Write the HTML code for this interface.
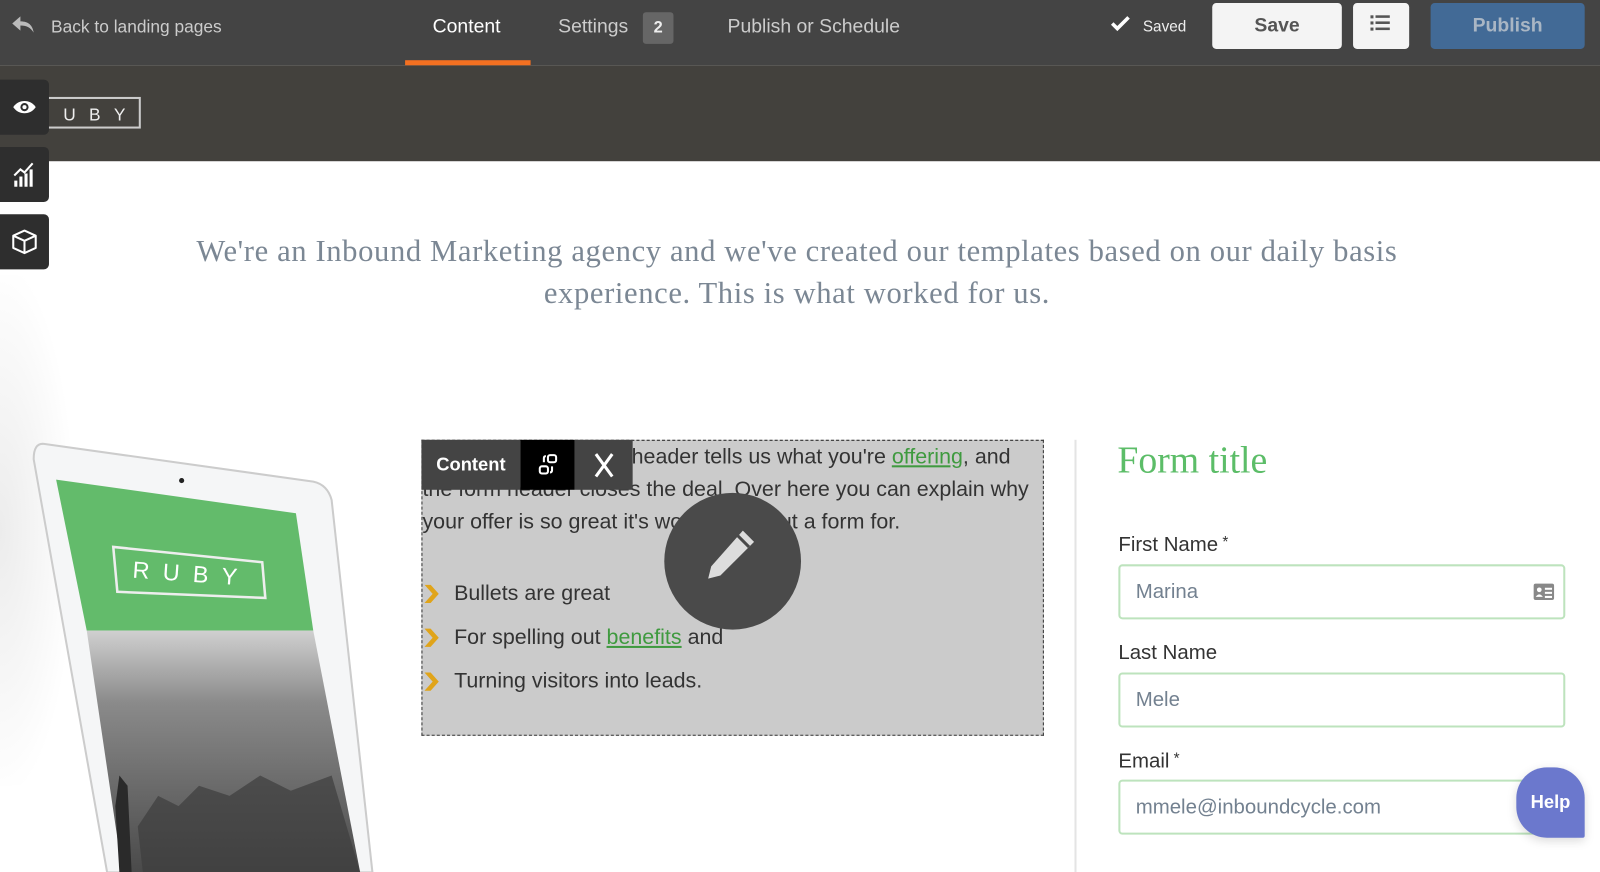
<!DOCTYPE html>
<html><head><meta charset="utf-8"><style>
*{box-sizing:border-box;margin:0;padding:0}
body{width:1600px;height:855px;overflow:hidden;background:#fff;font-family:"Liberation Sans",sans-serif;position:relative}
#w{position:absolute;left:0;top:0;width:1568px;height:838px;transform:scale(1.0204);transform-origin:0 0}
.abs{position:absolute}
.top{left:0;top:0;width:1600px;height:64px;background:#444}
.band{left:0;top:64px;width:1600px;height:94px;background:#43413d}
.nav{color:#ddd;font-size:19px;top:16px}
.side{left:0;width:48px;height:54px;background:#2e2e2e;border-radius:0 5px 5px 0;display:flex;align-items:center;justify-content:center}
.intro{left:160px;width:1242px;top:226px;text-align:center;font-family:"Liberation Serif",serif;font-size:30px;letter-spacing:0.6px;line-height:41px;color:#7b8794;white-space:nowrap}
.cbox{left:413px;top:431px;width:610px;height:290px;background:#cbcbcb;border:1.5px dashed #333;font-family:"Liberation Sans Narrow","Liberation Sans",sans-serif;font-size:21px;color:#333}
.cbox p{position:absolute;left:0;line-height:32px}
.cbox a{color:#3f9a3f;text-decoration:underline}
.lbl{left:1096px;font-size:20px;color:#333}
.inp{left:1096px;width:438px;height:54px;border:2px solid #bde3bd;border-radius:4px;font-size:20px;color:#738190;padding:14px 0 0 15px;background:#fff}
</style></head><body><div id="w">
<div class="abs top"></div>
<div class="abs band"></div>
<svg class="abs" style="left:10px;top:14px" width="26" height="22" viewBox="0 0 26 22"><path d="M10 2 L2 9 L10 16 V11 C16 11 20 13 23 18 C22 11 18 7 10 7 Z" fill="#bbb"/></svg>
<div class="abs nav" style="left:50px;font-size:17px;top:17px;color:#ccc">Back to landing pages</div>
<div class="abs nav" style="left:424px;color:#fff">Content</div>
<div class="abs" style="left:397px;top:59px;width:123px;height:5px;background:#f37021"></div>
<div class="abs nav" style="left:547px;color:#ccc">Settings</div>
<div class="abs" style="left:630px;top:12px;width:30px;height:31px;background:#666;border-radius:3px;color:#eee;font-weight:bold;font-size:16px;text-align:center;line-height:31px">2</div>
<div class="abs nav" style="left:713px;color:#ccc">Publish or Schedule</div>
<svg class="abs" style="left:1088px;top:15px" width="20" height="16" viewBox="0 0 20 16"><path d="M2 8 L7 13 L18 2" stroke="#fff" stroke-width="3.5" fill="none"/></svg>
<div class="abs" style="left:1120px;top:18px;color:#eee;font-size:15px">Saved</div>
<div class="abs" style="left:1188px;top:3px;width:127px;height:45px;background:#f4f4f4;border-radius:4px;color:#555;font-weight:bold;font-size:19px;text-align:center;line-height:45px">Save</div>
<div class="abs" style="left:1326px;top:3px;width:55px;height:45px;background:#f4f4f4;border-radius:4px"></div>
<svg class="abs" style="left:1343px;top:14px" width="20" height="18" viewBox="0 0 20 18"><g fill="#555"><rect x="0" y="1" width="3" height="3"/><rect x="0" y="7" width="3" height="3"/><rect x="0" y="13" width="3" height="3"/><rect x="5" y="1" width="14" height="2.5"/><rect x="5" y="7" width="14" height="2.5"/><rect x="5" y="13" width="14" height="2.5"/></g></svg>
<div class="abs" style="left:1402px;top:3px;width:151px;height:45px;background:#426a96;border-radius:4px;color:#a9b6c4;font-weight:bold;font-size:19px;text-align:center;line-height:45px">Publish</div>

<div class="abs" style="left:30px;top:95px;width:108px;height:31px;border:2px solid #ccc;color:#eee;font-size:17px;letter-spacing:13px;padding:6px 0 0 30px">UBY</div>
<div class="abs side" style="top:78px"><svg width="24" height="16" viewBox="0 0 24 16"><path d="M1 8 C6 0 18 0 23 8 C18 16 6 16 1 8Z" fill="#fff"/><circle cx="12" cy="8" r="4" fill="#2e2e2e"/><circle cx="12" cy="8" r="2" fill="#fff"/></svg></div>
<div class="abs side" style="top:144px"><svg width="24" height="26" viewBox="0 0 24 26"><g fill="#fff"><rect x="2" y="19" width="3" height="6"/><rect x="7" y="15" width="3" height="10"/><rect x="12" y="12" width="3" height="13"/><rect x="17" y="8" width="3" height="17"/></g><path d="M2 14 L8 8 L12 11 L20 2" stroke="#fff" stroke-width="2" fill="none"/></svg></div>
<div class="abs side" style="top:210px"><svg width="26" height="26" viewBox="0 0 26 26"><path d="M13 2 L24 7 V19 L13 24 L2 19 V7 Z M2 7 L13 12 L24 7 M13 12 V24" stroke="#fff" stroke-width="2" fill="none" stroke-linejoin="round"/></svg></div>

<div class="abs intro">We're an Inbound Marketing agency and we've created our templates based on our daily basis<br>experience. This is what worked for us.</div>

<div class="abs" style="left:0;top:270px;width:70px;height:500px;background:radial-gradient(ellipse at 0% 50%,#ececec 0%,#f6f6f6 40%,#fff 75%)"></div>
<svg class="abs" style="left:25px;top:430px" width="350" height="425" viewBox="0 0 350 425">
<defs><linearGradient id="g" x1="0" y1="0" x2="0" y2="1"><stop offset="0" stop-color="#d0d0d0"/><stop offset="0.3" stop-color="#8a8a8a"/><stop offset="1" stop-color="#4a4a4a"/></linearGradient></defs>
<path d="M18 5 Q8 4 8 20 L80 425 L340 425 L300 60 Q296 45 282 42 Z" fill="#f5f6f7" stroke="#ccc" stroke-width="2"/>
<circle cx="153" cy="41" r="2.5" fill="#222"/>
<path d="M30 40 L265 73 L282 188 L60 188 Z" fill="#63bb6b"/>
<path d="M86 106 L232 121 L235 156 L90 150 Z" fill="none" stroke="#eee" stroke-width="2.5"/>
<text x="105" y="140" font-family="Liberation Sans" font-size="23" fill="#fff" letter-spacing="13" transform="rotate(4 160 130)">RUBY</text>
<path d="M60 188 L282 188 L328 425 L95 425 Z" fill="url(#g)"/>
<path d="M88 360 L92 330 L100 340 L104 425 L92 425 Z" fill="#2a2a2a"/>
<path d="M110 380 L130 350 L150 360 L170 340 L200 350 L230 330 L260 345 L300 330 L328 425 L115 425 Z" fill="#3d3d3d" opacity="0.7"/>
</svg>

<div class="abs cbox">
<p style="left:205px;top:0">header tells us what you're <a>offering</a>, and</p>
<p style="top:32px">the form header closes the deal. Over here you can explain why</p>
<p style="top:64px">your offer is so great it's worth filling out a form for.</p>
<p style="left:31px;top:134px">Bullets are great</p>
<p style="left:31px;top:177px">For spelling out <a>benefits</a> and</p>
<p style="left:31px;top:220px">Turning visitors into leads.</p>
<svg style="position:absolute;left:0;top:141px" width="20" height="110" viewBox="0 0 20 110"><g fill="#e0a41a"><path d="M2 0 L8 0 L16 9 L8 18 L2 18 L10 9Z"/><path d="M2 43 L8 43 L16 52 L8 61 L2 61 L10 52Z"/><path d="M2 86 L8 86 L16 95 L8 104 L2 104 L10 95Z"/></g></svg>
</div>
<div class="abs" style="left:413px;top:431px;width:97px;height:49px;background:#444;color:#fff;font-weight:bold;font-size:18px;line-height:49px;text-align:center">Content</div>
<div class="abs" style="left:510px;top:431px;width:53px;height:49px;background:#000"><svg style="margin:13px 0 0 16px" width="22" height="22" viewBox="0 0 22 22"><g stroke="#fff" stroke-width="2" fill="none"><rect x="11" y="2" width="8" height="7" rx="2"/><rect x="3" y="13" width="8" height="7" rx="2"/><path d="M7 9 V5 Q7 3 9 3 M15 13 V17 Q15 19 13 19"/></g></svg></div>
<div class="abs" style="left:563px;top:431px;width:57px;height:49px;background:#444"><svg style="margin:12px 0 0 18px" width="22" height="26" viewBox="0 0 22 26"><path d="M3 2 L19 24 M19 2 L3 24" stroke="#fff" stroke-width="3"/></svg></div>
<div class="abs" style="left:651px;top:483px;width:134px;height:134px;border-radius:50%;background:#4a4a4a"></div>
<svg class="abs" style="left:690px;top:515px" width="56" height="56" viewBox="0 0 56 56"><path d="M38 5 L49 16 L16 49 L4 52 L7 40 Z" fill="#ddd"/><path d="M33 10 L44 21" stroke="#4a4a4a" stroke-width="3"/></svg>

<div class="abs" style="left:1053px;top:431px;width:2px;height:424px;background:#e4e4e4"></div>
<div class="abs" style="left:1095px;top:430px;font-family:'Liberation Serif',serif;font-size:37px;color:#5cbd68">Form title</div>
<div class="abs lbl" style="top:523px">First Name<span style="font-size:15px;vertical-align:top"> *</span></div>
<div class="abs inp" style="top:553px">Marina</div>
<svg class="abs" style="left:1502px;top:571px" width="22" height="18" viewBox="0 0 22 18"><rect x="1" y="1" width="20" height="16" rx="2" fill="#888"/><circle cx="6.5" cy="7" r="2.3" fill="#fff"/><path d="M3 14 Q6.5 9 10 14Z" fill="#fff"/><rect x="12" y="5" width="7" height="2" fill="#fff"/><rect x="12" y="9" width="7" height="2" fill="#fff"/><rect x="12" y="13" width="7" height="2" fill="#fff"/></svg>
<div class="abs lbl" style="top:629px">Last Name</div>
<div class="abs inp" style="top:659px">Mele</div>
<div class="abs lbl" style="top:735px">Email<span style="font-size:15px;vertical-align:top"> *</span></div>
<div class="abs inp" style="top:764px">mmele@inboundcycle.com</div>
<div class="abs" style="left:1486px;top:752px;width:67px;height:69px;background:#6b78cd;border-radius:30px 30px 2px 30px;color:#fff;font-weight:bold;font-size:18px;line-height:69px;text-align:center;box-shadow:0 3px 10px rgba(0,0,0,.15)">Help</div>
</div></body></html>
